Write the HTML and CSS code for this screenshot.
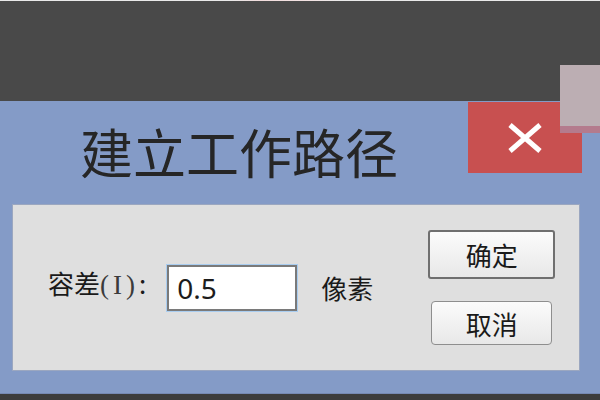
FILE: index.html
```html
<!DOCTYPE html>
<html lang="zh-CN">
<head>
<meta charset="utf-8">
<title>建立工作路径</title>
<link rel="stylesheet" href="styles.css">
</head>
<body>
<div class="topline"></div>
<div class="backdrop"></div>
<div class="overlay-block"><div class="overlay-foot"></div></div>
<div class="dialog">
  <div class="titlebar">
    <div class="title">建立工作路径</div>
    <div class="close">
      <svg width="36" height="30" viewBox="0 0 36 30"><path d="M3 2 L33 28 M33 2 L3 28" stroke="#ffffff" stroke-width="5" fill="none"/></svg>
    </div>
  </div>
  <div class="panel">
    <div class="field">
      <span class="label">容差<span class="accel">(I)</span>:</span>
      <div class="input">0.5</div>
      <span class="unit">像素</span>
    </div>
    <div class="buttons">
      <div class="btn btn-default">确定</div>
      <div class="btn">取消</div>
    </div>
  </div>
</div>
<div class="bottom"></div>
</body>
</html>
```
FILE: styles.css
```css
html, body {
  margin: 0;
  padding: 0;
}
body {
  width: 600px;
  height: 400px;
  overflow: hidden;
  background: #494949;
  font-family: "Noto Sans CJK SC", "Noto Sans", sans-serif;
  position: relative;
}
.topline {
  height: 1px;
  background: linear-gradient(90deg, #e9e9e9 0, #e9e9e9 230px, #f1dcdc 260px, #f3e3e3 310px, #e9e9e9 340px);
}
.backdrop {
  height: 100px;
  background: #494949;
}
.overlay-block {
  position: absolute;
  left: 560px;
  top: 65px;
  width: 40px;
  height: 68px;
  background: #bcaeb3;
  z-index: 2;
}
.overlay-foot {
  position: absolute;
  left: 0;
  bottom: 0;
  width: 40px;
  height: 7px;
  background: #b47b8d;
}
.dialog {
  background: #849bc7;
  height: 292px;
  display: flex;
  flex-direction: column;
  border-bottom: 1px solid #7689b3;
}
.titlebar {
  display: flex;
  align-items: flex-start;
  height: 103px;
}
.title {
  margin-left: 80px;
  margin-top: 24px;
  font-size: 53px;
  line-height: 53px;
  color: #262626;
}
.close {
  margin-left: auto;
  margin-right: 18px;
  margin-top: 1px;
  width: 114px;
  height: 71px;
  background: #c85050;
  display: flex;
  align-items: center;
  justify-content: center;
}
.panel {
  margin: 0 20px 0 12px;
  height: 165px;
  background: #dfdfdf;
  border: 1px solid #9ba7c0;
  display: flex;
  align-items: center;
}
.field {
  display: flex;
  align-items: center;
  margin-left: 35px;
}
.label {
  font-size: 26px;
  color: #1a1a1a;
  margin-bottom: 10px;
  white-space: nowrap;
}
.accel {
  font-family: "Liberation Serif", serif;
  color: #3b3b3b;
  letter-spacing: 4px;
  font-size: 27px;
}
.input {
  margin-left: 21px;
  width: 118px;
  height: 42px;
  background: #ffffff;
  border: 2px solid #7a7a7a;
  box-shadow: 0 0 0 1px #a9cdf0;
  font-family: "Noto Sans", sans-serif;
  font-size: 28px;
  line-height: 42px;
  padding-left: 8px;
  box-sizing: content-box;
  color: #1c1c1c;
}
.unit {
  margin-left: 24px;
  font-size: 26px;
  color: #1a1a1a;
}
.buttons {
  margin-left: 55px;
  display: flex;
  flex-direction: column;
  align-items: center;
  gap: 22px;
}
.btn {
  width: 121px;
  height: 44px;
  box-sizing: border-box;
  border: 1px solid #8e8e8e;
  border-radius: 4px;
  background: linear-gradient(#fbfbfb, #e8e8e8);
  display: flex;
  align-items: center;
  justify-content: center;
  font-size: 26px;
  color: #1a1a1a;
}
.btn-default {
  width: 127px;
  height: 49px;
  border: 2px solid #6f6f6f;
  border-radius: 3px;
}
.bottom {
  height: 6px;
  background: #3c3c3c;
}
```
